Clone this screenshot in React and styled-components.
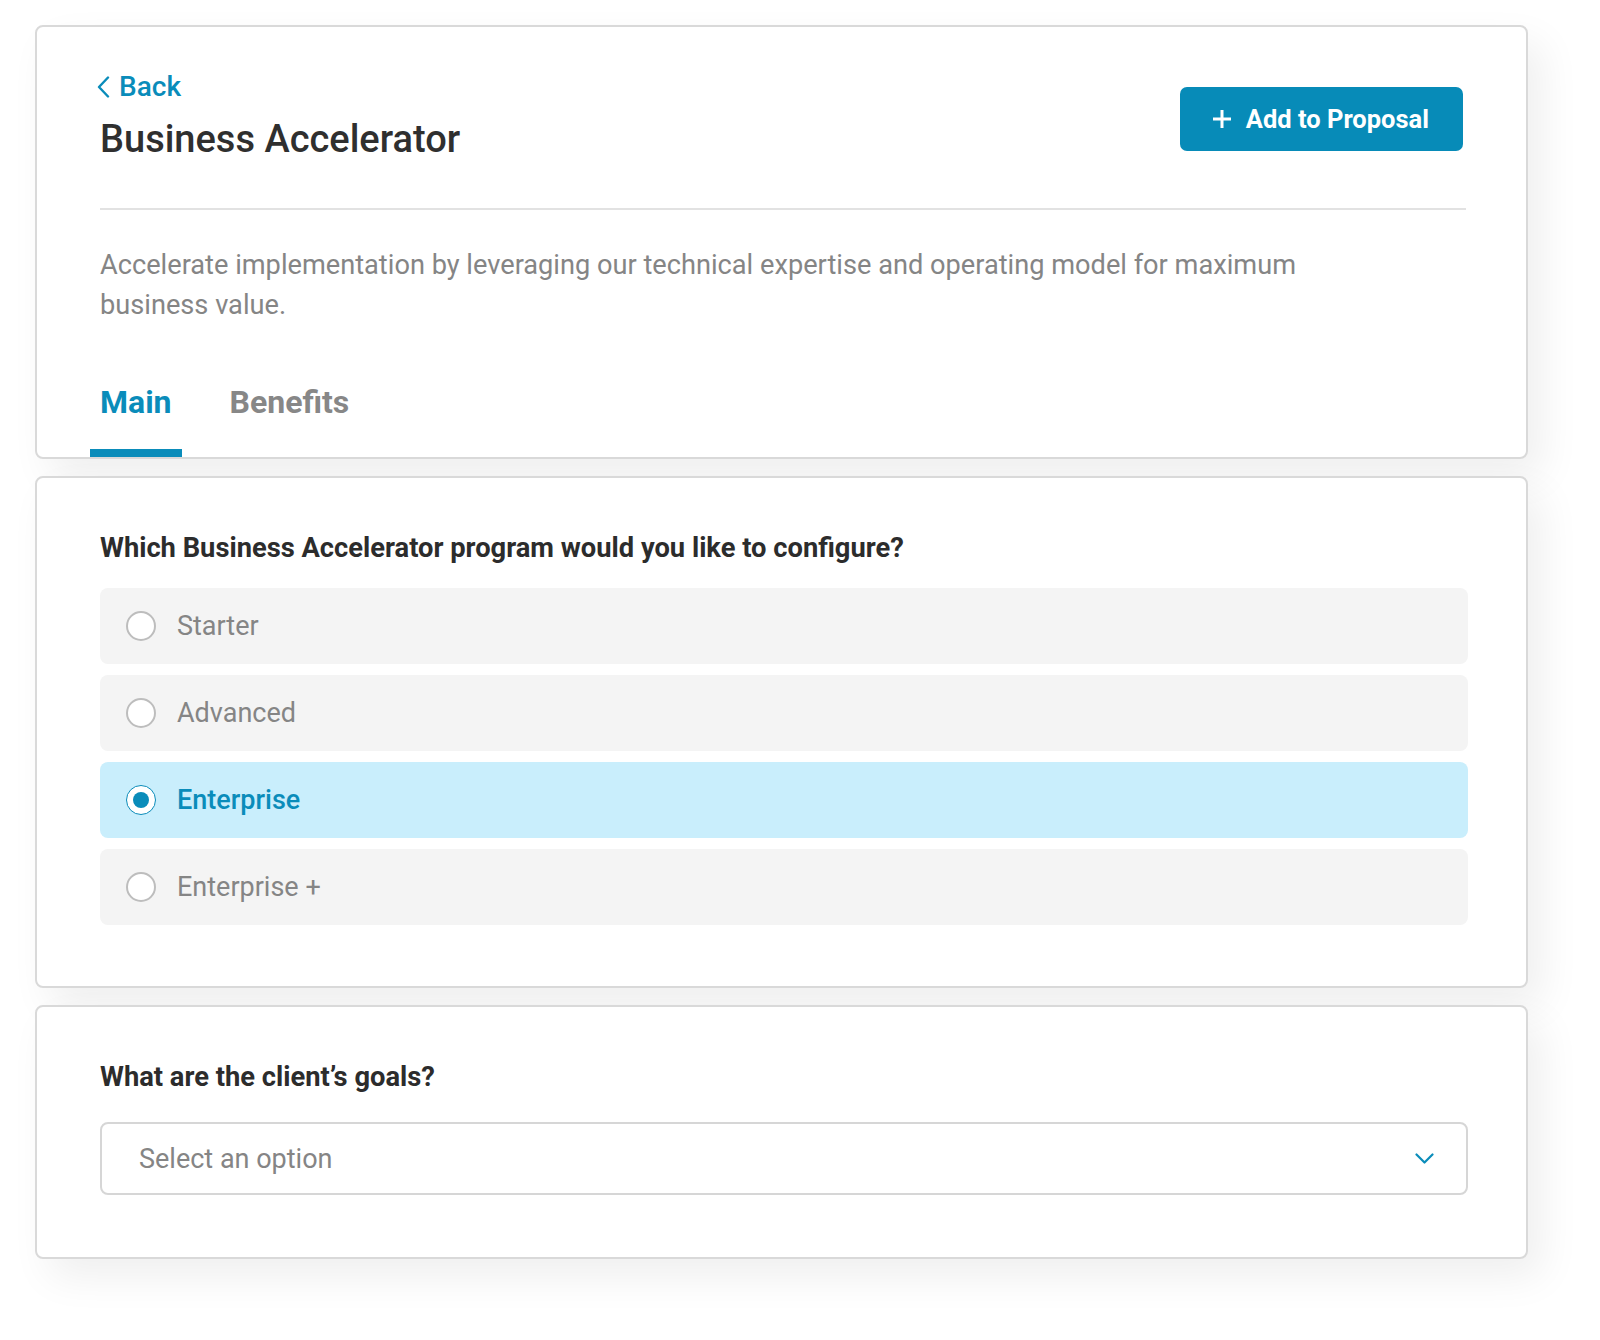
import React from 'react';
import styled, { createGlobalStyle } from 'styled-components';

const BLUE = '#0a8cba';
const GRAY_TEXT = '#858585';

const GlobalStyle = createGlobalStyle`
  html, body {
    margin: 0;
    padding: 0;
    background: #ffffff;
    font-family: Roboto, 'Liberation Sans', Arial, sans-serif;
    -webkit-font-smoothing: antialiased;
  }
  * {
    box-sizing: border-box;
  }
`;

// Layout

const Page = styled.div`
  padding: 25px 0 60px 35px;
`;

const Column = styled.div`
  width: 1493px;
  display: flex;
  flex-direction: column;
  gap: 17px;
`;

const Card = styled.section`
  background: #ffffff;
  border: 2px solid #d9d9d9;
  border-radius: 8px;
  box-shadow: 14px 18px 40px rgba(0, 0, 0, 0.065);
  padding: ${(props) => props.pad};
`;

// Header

const HeaderRow = styled.div`
  display: flex;
  justify-content: space-between;
  align-items: flex-start;
`;

const TitleBlock = styled.div`
  display: flex;
  flex-direction: column;
`;

const BackLink = styled.a`
  display: inline-flex;
  align-items: center;
  gap: 9px;
  margin: 2px 0 0 -3px;
  color: ${BLUE};
  font-size: 28px;
  font-weight: 500;
  line-height: 34px;
  text-decoration: none;
  cursor: pointer;
`;

const Title = styled.h1`
  margin: 13px 0 0;
  font-size: 38px;
  font-weight: 500;
  line-height: 44px;
  color: #2f2f2f;
`;

const PrimaryButton = styled.button`
  margin-top: 19px;
  margin-right: 3px;
  height: 64px;
  display: inline-flex;
  align-items: center;
  gap: 14px;
  padding: 0 34px 0 32px;
  border: none;
  border-radius: 7px;
  background: #078bb8;
  color: #ffffff;
  font-family: inherit;
  font-size: 25.5px;
  font-weight: 700;
  cursor: pointer;
`;

const Divider = styled.hr`
  margin: 47px 0 0;
  border: none;
  height: 2px;
  background: #e2e2e2;
`;

const Description = styled.p`
  margin: 35px 0 0;
  max-width: 1250px;
  font-size: 27.2px;
  line-height: 40px;
  color: ${GRAY_TEXT};
`;

const Tabs = styled.nav`
  display: flex;
  gap: 38px;
  margin: 58px 0 0 -10px;
`;

const Tab = styled.div`
  padding: 0 10px 28px;
  border-bottom: 8px solid ${(props) => (props.active ? BLUE : 'transparent')};
  font-size: 32px;
  font-weight: 700;
  line-height: 38px;
  color: ${(props) => (props.active ? BLUE : '#878787')};
  cursor: pointer;
`;

// Questions

const Question = styled.h2`
  margin: 0 0 ${(props) => props.gap || 24}px;
  font-size: 27.3px;
  font-weight: 700;
  line-height: 32px;
  color: #2c2c2c;
`;

const OptionList = styled.div`
  display: flex;
  flex-direction: column;
  gap: 11px;
`;

const Option = styled.label`
  height: 76px;
  display: flex;
  align-items: center;
  gap: 21px;
  padding-left: 26px;
  border-radius: 8px;
  background: ${(props) => (props.selected ? '#c9eefc' : '#f4f4f4')};
  color: ${(props) => (props.selected ? BLUE : GRAY_TEXT)};
  font-size: 27px;
  font-weight: ${(props) => (props.selected ? 500 : 400)};
  cursor: pointer;
`;

const Radio = styled.span`
  width: 30px;
  height: 30px;
  flex: none;
  display: flex;
  align-items: center;
  justify-content: center;
  border-radius: 50%;
  background: #ffffff;
  border: ${(props) =>
    props.checked ? `1.5px solid ${BLUE}` : '2px solid #bdbdbd'};

  &::after {
    content: '';
    display: ${(props) => (props.checked ? 'block' : 'none')};
    width: 16px;
    height: 16px;
    border-radius: 50%;
    background: ${BLUE};
  }
`;

const Select = styled.div`
  height: 73px;
  display: flex;
  align-items: center;
  justify-content: space-between;
  padding: 0 32px 0 37px;
  border: 2px solid #d6d6d6;
  border-radius: 8px;
  font-size: 27px;
  color: ${GRAY_TEXT};
  cursor: pointer;
`;

// Icons

const ChevronLeft = () => (
  <svg width="13" height="22" viewBox="0 0 13 22" fill="none">
    <path
      d="M11 1.5 L2 11 L11 20.5"
      stroke="currentColor"
      strokeWidth="2.4"
      strokeLinecap="round"
      strokeLinejoin="round"
    />
  </svg>
);

const PlusIcon = () => (
  <svg width="20" height="20" viewBox="0 0 20 20" fill="none">
    <path d="M10 1 V19 M1 10 H19" stroke="#ffffff" strokeWidth="3" />
  </svg>
);

const ChevronDown = () => (
  <svg width="19" height="11" viewBox="0 0 19 11" fill="none">
    <path
      d="M1.5 1.5 L9.5 9.5 L17.5 1.5"
      stroke={BLUE}
      strokeWidth="2.2"
      strokeLinecap="round"
      strokeLinejoin="round"
    />
  </svg>
);

const programs = ['Starter', 'Advanced', 'Enterprise', 'Enterprise +'];

const App = () => {
  const selected = 'Enterprise';

  return (
    <>
      <GlobalStyle />
      <Page>
        <Column>
          <Card pad="41px 60px 0 63px">
            <HeaderRow>
              <TitleBlock>
                <BackLink>
                  <ChevronLeft />
                  Back
                </BackLink>
                <Title>Business Accelerator</Title>
              </TitleBlock>
              <PrimaryButton>
                <PlusIcon />
                Add to Proposal
              </PrimaryButton>
            </HeaderRow>
            <Divider />
            <Description>
              Accelerate implementation by leveraging our technical expertise
              and operating model for maximum business value.
            </Description>
            <Tabs>
              <Tab active>Main</Tab>
              <Tab>Benefits</Tab>
            </Tabs>
          </Card>

          <Card pad="54px 58px 61px 63px">
            <Question>
              Which Business Accelerator program would you like to configure?
            </Question>
            <OptionList>
              {programs.map((name) => (
                <Option key={name} selected={name === selected}>
                  <Radio checked={name === selected} />
                  {name}
                </Option>
              ))}
            </OptionList>
          </Card>

          <Card pad="54px 58px 62px 63px">
            <Question gap={29}>What are the client’s goals?</Question>
            <Select>
              Select an option
              <ChevronDown />
            </Select>
          </Card>
        </Column>
      </Page>
    </>
  );
};

export default App;
